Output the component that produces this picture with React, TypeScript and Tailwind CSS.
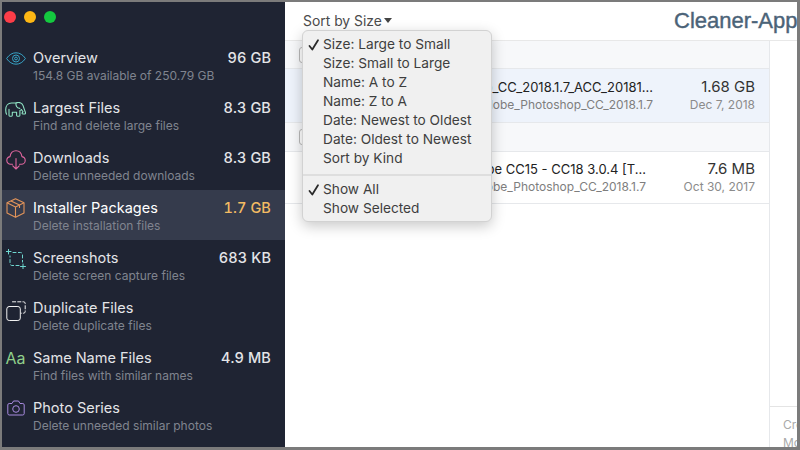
import React from "react";

const font = { fontFamily: "Inter, 'Noto Sans', sans-serif" };

const Eye = () => (
  <svg width="20" height="13" viewBox="0 0 20 13" fill="none" stroke="#37a3c6" strokeWidth="1">
    <path d="M.6 6.500C3 2.800 6.300.8 10 .8s7 2 9.400 5.700C17 10.200 13.700 12.200 10 12.200S3 10.200.6 6.500Z" />
    <circle cx="10" cy="6.500" r="3.500" />
    <circle cx="10" cy="6.500" r="1.400" />
  </svg>
);
const Elephant = () => (
  <svg width="21" height="15" viewBox="0 0 21 15" fill="none" stroke="#8fe3c4" strokeWidth="1.100" strokeLinejoin="round" strokeLinecap="round">
    <path d="M1.600 12.200C.9 11.200.7 9.500.7 7.800.7 3.500 3.200 1 6.500 1H11c.8-.5 1.800-.7 2.800-.6 2 .2 3.700 1.400 4.300 3.200.6 1.800 1.400 4.400 2.300 6.600.5 1.200-.2 1.800-1.100 1.800h-1.600c-.5 0-.8-.6-.5-1.100l.8-1.100-1.600-2.300c-.3.500-.9.900-1.500 1v4.800c0 .6-.3.900-.8.900h-1.700c-.5 0-.8-.3-.8-.9v-3H7.300v3c0 .6-.3.900-.8.900H4.800c-.5 0-.8-.3-.8-.9V7.300" />
    <path d="M11 1c-.4 2.300.6 5 3.800 5.400" />
  </svg>
);
const CloudDown = () => (
  <svg width="20" height="20" viewBox="0 0 20 20" fill="none" stroke="#e0669f" strokeWidth="1.100" strokeLinecap="round" strokeLinejoin="round">
    <path d="M6.500 14.200H4.600C2.500 14.200.8 12.500.8 10.400c0-1.900 1.400-3.500 3.200-3.800C4.600 3.200 7 .8 10 .8s5.400 2.400 6 5.800c1.800.3 3.200 1.900 3.200 3.800 0 2.100-1.700 3.800-3.800 3.800h-1.900" />
    <path d="M10 8.500V19M6.800 15.800 10 19l3.200-3.200" />
  </svg>
);
const Box = () => (
  <svg width="19" height="20" viewBox="0 0 19 20" fill="none" stroke="#e2945a" strokeWidth="1.100" strokeLinejoin="round">
    <path d="M9.500.8 18 4.800V15L9.500 19.200 1 15V4.800L9.500.8Z" />
    <path d="M1 4.800 9.500 9 18 4.800M9.500 9V19.200M5 2.900l8.500 4.200v3" />
  </svg>
);
const Crop = () => (
  <svg width="20" height="20" viewBox="0 0 20 20" fill="none" stroke="#6fd8d0" strokeWidth="1" strokeLinecap="round">
    <path d="M2.500 0v5M0 2.500h5M17 15v5M14.500 17.500h5" />
    <path d="M7 3.500h7.500a2 2 0 0 1 2 2V13M13 16.500H6a2 2 0 0 1-2-2V7" strokeDasharray="3 2.400" />
  </svg>
);
const Dup = () => (
  <svg width="20" height="20" viewBox="0 0 20 20" fill="none" stroke="#f2f2f2" strokeWidth="1" strokeLinecap="round">
    <path d="M6.500.8H17.500a1.700 1.700 0 0 1 1.700 1.700v8a1.700 1.700 0 0 1-1.700 1.700H15" strokeDasharray="3.200 2" />
    <rect x=".8" y="5.500" width="13.500" height="14" rx="2.400" />
  </svg>
);
const Camera = () => (
  <svg width="18" height="16" viewBox="0 0 18 16" fill="none" stroke="#a98be0" strokeWidth="1" strokeLinejoin="round">
    <path d="M2.200 3.500H5L6.500 1h5L13 3.500h2.800c.8 0 1.400.6 1.400 1.400v8.700c0 .8-.6 1.400-1.400 1.400H2.200c-.8 0-1.400-.6-1.400-1.400V4.900c0-.8.6-1.400 1.400-1.400Z" />
    <circle cx="9" cy="9" r="3.300" />
  </svg>
);
const Check = () => (
  <svg width="12" height="12" viewBox="0 0 12 12" fill="none" stroke="#2a2a2a" strokeWidth="1.800" strokeLinecap="round" strokeLinejoin="round">
    <path d="M1.500 7 4.300 10.500 10 1.300" />
  </svg>
);

const items = [
  { icon: <Eye />, m: "mt-0", t: "Overview", s: "154.8 GB available of 250.79 GB", v: "96 GB" },
  { icon: <Elephant />, m: "mt-[1px]", t: "Largest Files", s: "Find and delete large files", v: "8.3 GB" },
  { icon: <CloudDown />, m: "mt-[2px]", t: "Downloads", s: "Delete unneeded downloads", v: "8.3 GB" },
  { icon: <Box />, m: "mt-0", t: "Installer Packages", s: "Delete installation files", v: "1.7 GB", active: true },
  { icon: <Crop />, m: "mt-[1px]", t: "Screenshots", s: "Delete screen capture files", v: "683 KB" },
  { icon: <Dup />, m: "mt-[3px]", t: "Duplicate Files", s: "Delete duplicate files", v: "" },
  { icon: <span className="text-[16px] leading-none text-[#8fd08a]">Aa</span>, m: "mt-0", t: "Same Name Files", s: "Find files with similar names", v: "4.9 MB" },
  { icon: <Camera />, m: "mt-0", t: "Photo Series", s: "Delete unneeded similar photos", v: "" },
];

const menuA = ["Size: Large to Small", "Size: Small to Large", "Name: A to Z", "Name: Z to A", "Date: Newest to Oldest", "Date: Oldest to Newest", "Sort by Kind"];

const GroupHead = ({ h }: { h: string }) => (
  <div className={`${h} bg-[#f7f8fa] border-b border-[#e6e8eb] flex items-center pl-[14px] shrink-0`}>
    <div className="w-[16px] h-[16px] rounded-[3px] border border-[#b9b9b9] bg-white" />
  </div>
);

function FileRow({ name, path, size, date, selected, h, w }: { name: string; path: string; size: string; date: string; selected?: boolean; h: string; w: string }) {
  return (
    <div className={`${h} ${selected ? "bg-[#eef3fb]" : "bg-white"} border-b border-[#e6e8eb] flex items-center justify-between pr-[14px] shrink-0`}>
      <div className={`${w} flex flex-col items-end gap-[1px]`}>
        <span className="text-[13px] leading-[18px] text-[#222] whitespace-nowrap">{name}</span>
        <span className="text-[12px] leading-[16px] text-[#7e7e7e] whitespace-nowrap">{path}</span>
      </div>
      <div className="flex flex-col items-end gap-[1px]">
        <span className="text-[15px] leading-[18px] text-[#333]">{size}</span>
        <span className="text-[12px] leading-[16px] text-[#8b8b8b]">{date}</span>
      </div>
    </div>
  );
}

export default function App() {
  return (
    <div className="w-[800px] h-[450px] bg-[#7b7b7b] pt-[2px] pl-[2px] pr-[3px] pb-[3px] overflow-hidden" style={font}>
      <div className="relative flex h-full w-full overflow-hidden bg-white">
        <aside className="w-[283px] shrink-0 bg-[#1f2433] flex flex-col">
          <div className="h-[38px] flex items-start gap-[8px] pl-[2px] pt-[9px] shrink-0">
            <span className="w-[12px] h-[12px] rounded-full bg-[#fc3d48]" />
            <span className="w-[12px] h-[12px] rounded-full bg-[#fdb714]" />
            <span className="w-[12px] h-[12px] rounded-full bg-[#14c93f]" />
          </div>
          {items.map((it) => (
            <div key={it.t} className={`h-[50px] shrink-0 flex items-start pr-[14px] ${it.active ? "bg-[#353b4c]" : ""}`}>
              <div className={`w-[27px] h-[36px] mr-[4px] flex items-center justify-center ${it.m}`}>{it.icon}</div>
              <div className="flex-1 min-w-0 pt-[9px]">
                <div className={`text-[14.500px] leading-[18px] ${it.active ? "text-white" : "text-[#e4e5e8]"}`}>{it.t}</div>
                <div className="text-[12px] leading-[16px] mt-[1px] text-[#80848f] whitespace-nowrap">{it.s}</div>
              </div>
              <div className={`pt-[9px] text-[14.500px] leading-[18px] font-medium tracking-[0.1px] tabular-nums whitespace-nowrap ${it.active ? "text-[#f3bb63]" : "text-[#e4e5e8]"}`}>{it.v}</div>
            </div>
          ))}
        </aside>

        <main className="flex-1 min-w-0 flex flex-col">
          <header className="h-[39px] shrink-0 border-b border-[#e8e8e8] flex items-center justify-between pl-[18px] overflow-hidden">
            <div className="flex items-center gap-[2px] text-[13.900px] text-[#4b4b4b]">
              Sort by Size
              <span className="w-0 h-0 border-x-[4px] border-x-transparent border-t-[5px] border-t-[#444] mb-[1px]" />
            </div>
            <span className="text-[22px] text-[#4b6378] whitespace-nowrap w-[123px] overflow-hidden shrink-0 leading-[26px] [-webkit-text-stroke:0.4px_#4b6378]" style={{ fontFamily: "'Liberation Sans', sans-serif" }}>Cleaner-App</span>
          </header>
          <div className="flex-1 flex min-h-0">
            <div className="w-[485px] shrink-0 flex flex-col border-r border-[#e6e8eb]">
              <GroupHead h="h-[28px]" />
              <FileRow h="h-[54px]" w="w-[368px]" selected name="Adobe_Photoshop_CC_2018.1.7_ACC_20181..." path="Adobe_Photoshop_CC_2018.1.7" size="1.68 GB" date="Dec 7, 2018" />
              <GroupHead h="h-[29px]" />
              <FileRow h="h-[52px]" w="w-[361px]" name="Adobe CC15 - CC18 3.0.4 [T..." path="Adobe_Photoshop_CC_2018.1.7" size="7.6 MB" date="Oct 30, 2017" />
            </div>
            <div className="flex-1 flex flex-col justify-end overflow-hidden">
              <div className="border-t border-[#e4e4e4] h-[41px] pl-[13px] pt-[9px] text-[12px] leading-[18px] text-[#aaa] whitespace-nowrap">
                <div>Created</div>
                <div>Modified</div>
              </div>
            </div>
          </div>
        </main>

        <div className="absolute left-[300px] top-[28px] w-[190px] h-[192px] rounded-[6px] bg-[#f0f0f0] border border-[#d2d2d2] shadow-[0_4px_14px_rgba(0,0,0,0.22)] text-[13.700px] leading-[19px] text-[#3e3e3e] pt-[4px]">
          {menuA.map((m, i) => (
            <div key={m} className="h-[19px] flex items-center whitespace-nowrap">
              <span className="w-[20px] flex justify-end pr-[3px]">{i === 0 ? <Check /> : null}</span>
              {m}
            </div>
          ))}
          <div className="h-[2px] bg-[#dedede] mt-[6px] mb-[4px]" />
          {["Show All", "Show Selected"].map((m, i) => (
            <div key={m} className="h-[19px] flex items-center whitespace-nowrap">
              <span className="w-[20px] flex justify-end pr-[3px]">{i === 0 ? <Check /> : null}</span>
              {m}
            </div>
          ))}
        </div>
      </div>
    </div>
  );
}
